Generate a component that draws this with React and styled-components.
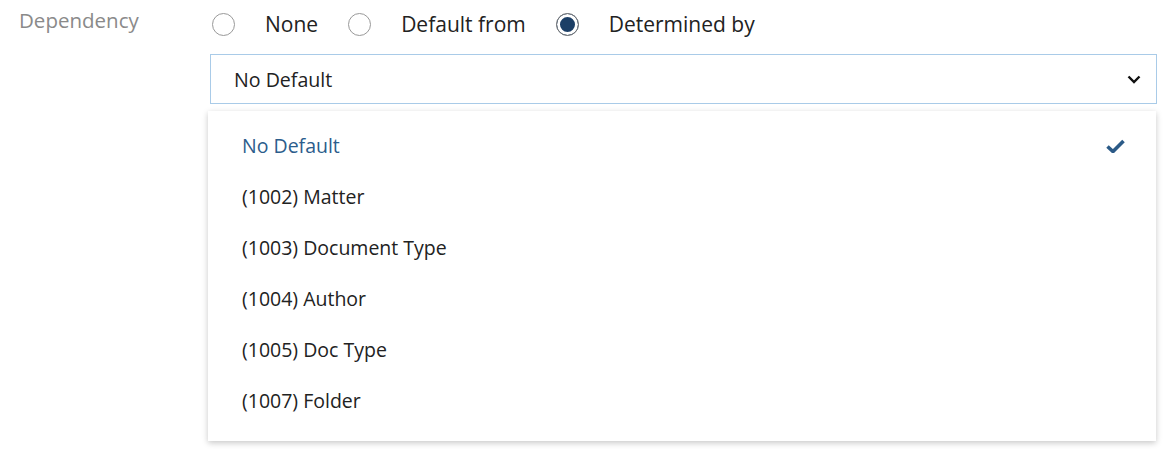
import React, { useState } from "react";
import styled, { createGlobalStyle } from "styled-components";

const options = [
    { id: "none", label: "No Default" },
    { id: "1002", label: "(1002) Matter" },
    { id: "1003", label: "(1003) Document Type" },
    { id: "1004", label: "(1004) Author" },
    { id: "1005", label: "(1005) Doc Type" },
    { id: "1007", label: "(1007) Folder" },
];

const modes = ["None", "Default from", "Determined by"];

export default function App() {
    const [mode, setMode] = useState("Determined by");
    const [selected, setSelected] = useState("none");
    const current = options.find((o) => o.id === selected);

    return (
        <Page>
            <GlobalStyle />
            <FieldRow>
                <Label>Dependency</Label>
                <Content>
                    <RadioGroup>
                        {modes.map((m) => (
                            <RadioOption key={m} onClick={() => setMode(m)}>
                                <RadioCircle checked={mode === m} />
                                <span>{m}</span>
                            </RadioOption>
                        ))}
                    </RadioGroup>
                    <SelectWrap>
                        <SelectBox>
                            <span>{current.label}</span>
                            <svg width="14" height="9" viewBox="0 0 14 9">
                                <path
                                    d="M1.5 1.5 L7 7 L12.5 1.5"
                                    fill="none"
                                    stroke="#111"
                                    strokeWidth="2.4"
                                />
                            </svg>
                        </SelectBox>
                        <Menu>
                            {options.map((o) => (
                                <MenuItem
                                    key={o.id}
                                    active={o.id === selected}
                                    onClick={() => setSelected(o.id)}
                                >
                                    <span>{o.label}</span>
                                    {o.id === selected && (
                                        <svg width="19" height="14" viewBox="0 0 19 14">
                                            <path
                                                d="M1.5 7.5 L7 12.5 L17.5 2"
                                                fill="none"
                                                stroke="#2b5a87"
                                                strokeWidth="3.6"
                                                strokeLinejoin="miter"
                                            />
                                        </svg>
                                    )}
                                </MenuItem>
                            ))}
                        </Menu>
                    </SelectWrap>
                </Content>
            </FieldRow>
        </Page>
    );
}

const GlobalStyle = createGlobalStyle`
    html, body {
        margin: 0;
        padding: 0;
        background: #fff;
    }
    body {
        font-family: "Open Sans", "Liberation Sans", sans-serif;
        color: #222;
    }
`;

const Page = styled.main`
    width: 1167px;
    height: 449px;
    overflow: hidden;
    box-sizing: border-box;
    padding: 7px 10px 0 19px;
`;

const FieldRow = styled.div`
    display: grid;
    grid-template-columns: 191px 1fr;
`;

const Label = styled.div`
    font-size: 20.5px;
    color: #8a8a8a;
    line-height: 26px;
`;

const Content = styled.div`
    display: flex;
    flex-direction: column;
`;

const RadioGroup = styled.div`
    display: flex;
    align-items: center;
    height: 34px;
    padding-left: 2px;
`;

const RadioOption = styled.label`
    display: flex;
    align-items: center;
    font-size: 21px;
    color: #222;
    margin-right: 30px;
    cursor: pointer;

    span {
        margin-left: 30px;
    }
`;

const RadioCircle = styled.div`
    width: 23px;
    height: 23px;
    box-sizing: border-box;
    border-radius: 50%;
    border: 1px solid ${(p) => (p.checked ? "#777" : "#999")};
    background: ${(p) => (p.checked ? "#1c3f66" : "#fff")};
    box-shadow: ${(p) => (p.checked ? "inset 0 0 0 3px #fff" : "none")};
`;

const SelectWrap = styled.div`
    position: relative;
    margin-top: 13px;
`;

const SelectBox = styled.div`
    height: 50px;
    box-sizing: border-box;
    border: 1px solid #a9cbe8;
    display: flex;
    align-items: center;
    justify-content: space-between;
    padding: 0 15px 0 23px;
    font-size: 19.6px;
    color: #222;
`;

const Menu = styled.ul`
    position: absolute;
    top: calc(100% + 7px);
    left: -2px;
    right: 1px;
    margin: 0;
    padding: 9px 0 15px;
    list-style: none;
    background: #fff;
    box-shadow: 0 2px 6px rgba(0, 0, 0, 0.22);
`;

const MenuItem = styled.li`
    height: 51px;
    display: flex;
    align-items: center;
    justify-content: space-between;
    padding: 0 31px 0 34px;
    font-size: 19.5px;
    color: ${(p) => (p.active ? "#2c5d8c" : "#222")};
    cursor: pointer;
`;
